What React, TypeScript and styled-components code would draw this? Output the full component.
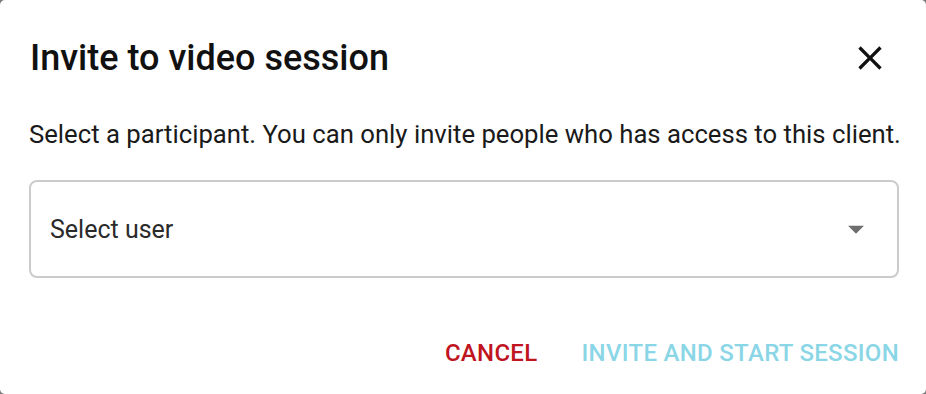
import React from 'react'
import styled, { createGlobalStyle } from 'styled-components'

const GlobalStyle = createGlobalStyle`
  html, body {
    margin: 0;
    padding: 0;
    background: #7a7a7a;
  }
  body {
    font-family: Roboto, "Liberation Sans", sans-serif;
  }
`

const Dialog = styled.div`
  width: 926px;
  height: 394px;
  box-sizing: border-box;
  background: #fff;
  border-radius: 5px;
  display: flex;
  flex-direction: column;
  padding: 37px 27px 0 29px;
`

const Header = styled.div`
  display: flex;
  align-items: center;
  justify-content: space-between;
  height: 42px;
`

const Title = styled.h2`
  margin: 0 0 0 1px;
  font-size: 36px;
  font-weight: 500;
  color: #111;
  line-height: 42px;
`

const CloseButton = styled.button`
  border: none;
  background: none;
  padding: 0;
  width: 40px;
  height: 40px;
  display: flex;
  align-items: center;
  justify-content: center;
  cursor: pointer;
  margin-right: 9px;
`

const Description = styled.p`
  margin: 39px 0 0 0;
  font-size: 25.7px;
  line-height: 32px;
  color: #1a1a1a;
  white-space: nowrap;
`

const SelectBox = styled.div`
  margin-top: 30px;
  height: 98px;
  border: 2px solid #cbcbcb;
  border-radius: 8px;
  box-sizing: border-box;
  display: flex;
  align-items: center;
  justify-content: space-between;
  padding: 0 22px 0 19px;
`

const Placeholder = styled.span`
  font-size: 25px;
  color: #2a2a2a;
`

const Actions = styled.div`
  display: flex;
  justify-content: flex-end;
  align-items: center;
  gap: 44px;
  margin-top: 63px;
`

const ActionButton = styled.button<{ $tone: 'danger' | 'disabled' }>`
  border: none;
  background: none;
  padding: 0;
  font-family: Roboto, "Liberation Sans", sans-serif;
  font-size: 24px;
  line-height: 24px;
  font-weight: 500;
  letter-spacing: 0.3px;
  text-transform: uppercase;
  color: ${(p) => (p.$tone === 'danger' ? '#c0141f' : '#8ad6e6')};
  cursor: pointer;
`

export default function App() {
  return (
    <>
      <GlobalStyle />
      <Dialog>
        <Header>
          <Title>Invite to video session</Title>
          <CloseButton aria-label="close">
            <svg width="40" height="40" viewBox="0 0 24 24">
              <path
                d="M19 6.41 17.59 5 12 10.59 6.41 5 5 6.41 10.59 12 5 17.59 6.41 19 12 13.41 17.59 19 19 17.59 13.41 12z"
                fill="#111"
              />
            </svg>
          </CloseButton>
        </Header>
        <Description>
          Select a participant. You can only invite people who has access to this client.
        </Description>
        <SelectBox>
          <Placeholder>Select user</Placeholder>
          <svg width="38" height="38" viewBox="0 0 24 24">
            <path d="M7 10l5 5 5-5z" fill="#6e6e6e" />
          </svg>
        </SelectBox>
        <Actions>
          <ActionButton $tone="danger">Cancel</ActionButton>
          <ActionButton $tone="disabled">Invite and start session</ActionButton>
        </Actions>
      </Dialog>
    </>
  )
}
